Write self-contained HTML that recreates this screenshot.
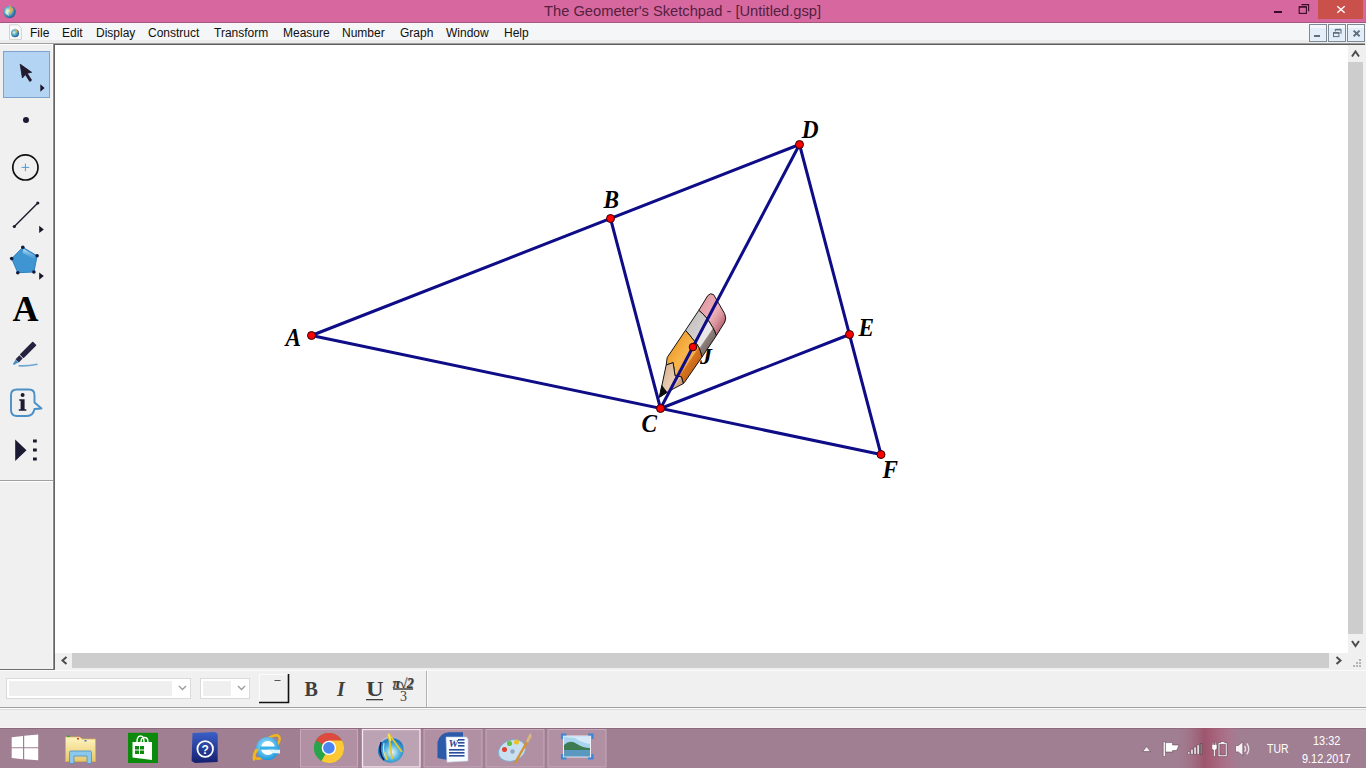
<!DOCTYPE html>
<html><head><meta charset="utf-8">
<style>
*{margin:0;padding:0;box-sizing:border-box}
html,body{width:1366px;height:768px;overflow:hidden;background:#f0f0f0;font-family:"Liberation Sans",sans-serif;position:relative}
.a{position:absolute}
#title{left:0;top:0;width:1366px;height:23px;background:#d6689f;border-bottom:1px solid #a05a80}
#ttext{left:544px;top:2px;font-size:14.7px;color:#55203f;white-space:nowrap;line-height:18px}
#close{left:1318px;top:0;width:45px;height:19px;background:#c9504b}
#menubar{left:0;top:23px;width:1366px;height:20px;background:#f5f6f7;border-top:1px solid #fbf3f8}
.mi{position:absolute;top:26px;font-size:12px;color:#101010;line-height:15px;white-space:nowrap}
#mline{left:0;top:43px;width:1365px;height:1px;background:#a0a0a0}
#mline2{left:53px;top:44px;width:1312px;height:1px;background:#5e5e5e}
#mline3{left:0;top:44px;width:53px;height:1px;background:#fff}
#mband{left:0;top:40px;width:1366px;height:3px;background:#ececec}
#leftp{left:0;top:45px;width:53px;height:624px;background:#f0f0f0}
#vline{left:53px;top:44px;width:1px;height:626px;background:#8a8a8a}
#vline2{left:54px;top:44px;width:1px;height:626px;background:#646464}
#lbot{left:0;top:669px;width:55px;height:1px;background:#6f6f6f}
#canvas{left:55px;top:45px;width:1293px;height:608px;background:#fff}
#vscroll{left:1348px;top:45px;width:17px;height:608px;background:#f0f0f0}
#vthumb{left:1348px;top:62px;width:15px;height:572px;background:#cdcdcd}
#hscroll{left:55px;top:653px;width:1310px;height:16px;background:#f0f0f0}
#hthumb{left:72px;top:653px;width:1257px;height:15px;background:#cdcdcd}
#tbar{left:0;top:670px;width:1366px;height:37px;background:#f0f0f0;border-top:1px solid #fafafa}
#sline{left:0;top:707px;width:1366px;height:1px;background:#a0a0a0}
#sline2{left:0;top:708px;width:1366px;height:1px;background:#fdfdfd}
#status{left:0;top:709px;width:1366px;height:19px;background:#f0f0f0}
#taskbar{left:0;top:728px;width:1366px;height:40px;background:#a17f92;border-top:1px solid #8c6a7e}
#s3{left:0;top:709px;width:1366px;height:1px;background:#dcdcdc}
#s4{left:0;top:727px;width:1366px;height:1px;background:#f8f2f6}
.lbl{position:absolute;font:bold italic 25px "Liberation Serif",serif;line-height:1;color:#000;transform:scaleX(0.93);transform-origin:50% 50%}
.tb{position:absolute;top:729px;width:59px;height:39px;background:rgba(255,255,255,0.12);border:1px solid rgba(255,255,255,0.3)}
.tray{position:absolute;color:#fff;font-size:12px;line-height:14px;white-space:nowrap}
</style></head><body>
<div id="title" class="a"></div>
<div id="ttext" class="a">The Geometer's Sketchpad - [Untitled.gsp]</div>
<div id="close" class="a"></div>
<div id="menubar" class="a"></div><div id="mband" class="a"></div>
<div class="mi" style="left:30px">File</div>
<div class="mi" style="left:62px">Edit</div>
<div class="mi" style="left:96px">Display</div>
<div class="mi" style="left:148px">Construct</div>
<div class="mi" style="left:214px">Transform</div>
<div class="mi" style="left:283px">Measure</div>
<div class="mi" style="left:342px">Number</div>
<div class="mi" style="left:400px">Graph</div>
<div class="mi" style="left:446px">Window</div>
<div class="mi" style="left:504px">Help</div>
<div id="mline" class="a"></div><div id="mline2" class="a"></div><div id="mline3" class="a"></div>
<div id="leftp" class="a"></div><div class="a" style="left:52px;top:45px;width:1px;height:624px;background:#f8f8f8"></div>
<div id="canvas" class="a"></div>
<div id="vline" class="a"></div><div id="vline2" class="a"></div>
<div id="lbot" class="a"></div>
<div id="vscroll" class="a"></div>
<div id="vthumb" class="a"></div>
<div id="hscroll" class="a"></div>
<div id="hthumb" class="a"></div>
<div id="tbar" class="a"></div>
<div id="sline" class="a"></div>
<div id="sline2" class="a"></div>
<div id="status" class="a"></div><div id="s3" class="a"></div><div id="s4" class="a"></div>
<div id="taskbar" class="a"></div>



<!-- window chrome -->
<svg class="a" style="left:0;top:0" width="1366" height="45" viewBox="0 0 1366 45">
<defs>
<radialGradient id="gspic" cx="0.4" cy="0.4" r="0.6"><stop offset="0" stop-color="#e8f4e0"/><stop offset="0.5" stop-color="#5fb0c8"/><stop offset="1" stop-color="#1f5f9a"/></radialGradient>
</defs>
<!-- app icon -->
<circle cx="9.5" cy="12" r="6.2" fill="url(#gspic)"/>
<path d="M9,4.2 L13.5,9.5 L10.5,15 Z" fill="#e8b040" opacity="0.85"/>
<path d="M7,8 L9,16 L5,13 Z" fill="#f4f0d0" opacity="0.8"/>
<!-- minimize -->
<rect x="1274" y="11" width="8" height="2" fill="#3a0a28"/>
<!-- restore -->
<rect x="1299.2" y="6.8" width="7.2" height="6.6" fill="none" stroke="#3a0a28" stroke-width="1.1"/>
<rect x="1299.2" y="6.4" width="7.2" height="1.2" fill="#3a0a28"/>
<path d="M1301.5,4.6 H1308.6 V11.2" fill="none" stroke="#3a0a28" stroke-width="1.1"/>
<!-- close X -->
<path d="M1337.3,6.2 L1344.7,12.8 M1344.7,6.2 L1337.3,12.8" stroke="#fff" stroke-width="1.4"/>
<!-- doc icon -->
<path d="M9.5,24.8 H18 L21.3,28 V39.4 H9.5 Z" fill="#fafafa" stroke="#c8c8c8" stroke-width="0.8"/>
<circle cx="15" cy="33.3" r="4" fill="url(#gspic)"/>
<path d="M14.8,27.8 L17.6,31.2 L15.3,34 Z" fill="#e8b040" opacity="0.8"/>
<!-- mdi buttons -->
<g fill="#e4eef8" stroke="#7f8994" stroke-width="1">
<rect x="1309.5" y="24.5" width="17" height="17"/>
<rect x="1328.5" y="24.5" width="17" height="17"/>
<rect x="1347.5" y="24.5" width="17" height="17"/>
</g>
<rect x="1314" y="35" width="6" height="2" fill="#5f6e7d"/>
<g fill="#f4f8fc"><rect x="1310" y="25" width="16" height="3"/><rect x="1329" y="25" width="16" height="3"/><rect x="1348" y="25" width="16" height="3"/></g>
<rect x="1333.5" y="32.6" width="5.4" height="4" fill="none" stroke="#5f6e7d" stroke-width="1"/>
<rect x="1333" y="32.1" width="6.4" height="1.6" fill="#5f6e7d"/>
<path d="M1335.3,31.5 V29.3 H1341 V33.9" fill="none" stroke="#5f6e7d" stroke-width="1"/>
<rect x="1335.3" y="29.1" width="5.7" height="1.3" fill="#5f6e7d"/>
<path d="M1353.6,30.6 L1359.6,36.3 M1359.6,30.6 L1353.6,36.3" stroke="#5f6e7d" stroke-width="1.9"/>
</svg>

<!-- left tools -->
<div class="a" style="left:3px;top:51px;width:47px;height:47px;background:#b4d4f4;border:1px solid #7ea3cf"></div>
<svg class="a" style="left:0;top:45px" width="53" height="440" viewBox="0 45 53 440">
<defs>
<linearGradient id="hlg" x1="0.4" y1="0" x2="0.2" y2="1"><stop offset="0" stop-color="#d8f0fc"/><stop offset="1" stop-color="#3f95d2" stop-opacity="0"/></linearGradient>
<linearGradient id="pg" x1="0" y1="0" x2="1" y2="1"><stop offset="0" stop-color="#4aa0dc"/><stop offset="0.5" stop-color="#9fd0f0"/><stop offset="1" stop-color="#3d8fce"/></linearGradient>
</defs>
<!-- arrow -->
<path d="M20.2,64.2 L31.6,72.3 L27.2,73.2 L31.6,80.2 L29.8,81.5 L25.4,74.6 L22.4,78 Z" fill="#231a30" stroke="#1a1428" stroke-width="0.8" stroke-linejoin="round"/>
<path d="M40.3,84.3 L44.6,88 L40.3,91.7 Z" fill="#1a1428"/>
<!-- point -->
<circle cx="26" cy="120" r="3" fill="#1c1a33"/>
<!-- circle -->
<circle cx="25.4" cy="167.4" r="12.6" fill="none" stroke="#111" stroke-width="1.7"/>
<path d="M25.4,163.6 V171.2 M21.6,167.4 H29.2" stroke="#4d9ad6" stroke-width="1"/>
<!-- segment -->
<line x1="14.3" y1="226.5" x2="37.8" y2="203" stroke="#1d1b2e" stroke-width="1.4"/>
<circle cx="14.3" cy="226.5" r="1.6" fill="#1d1b2e"/>
<circle cx="37.8" cy="203" r="1.6" fill="#1d1b2e"/>
<path d="M39.2,225.8 L43.8,229.4 L39.2,233 Z" fill="#1a1428"/>
<!-- polygon -->
<path d="M22.8,247.3 L37.1,255.8 L33.9,272 L17.8,272.7 L11.7,258.6 Z" fill="#3f95d2" stroke="#2e7fbd" stroke-width="1"/>
<path d="M23.5,248.8 L35.8,256.2 L35,260 L22.5,253 Z" fill="url(#hlg)"/>
<g fill="#151b3a"><circle cx="22.8" cy="247.3" r="1.8"/><circle cx="37.1" cy="255.8" r="1.8"/><circle cx="33.9" cy="272" r="1.8"/><circle cx="17.8" cy="272.7" r="1.8"/><circle cx="11.7" cy="258.6" r="1.8"/></g>
<path d="M39.2,272.5 L43.8,276.1 L39.2,279.7 Z" fill="#1a1428"/>
<!-- marker -->
<g transform="translate(33.6,344.4) rotate(135)">
<rect x="-1.5" y="-2.7" width="18.5" height="5.4" rx="0.8" fill="#24223f"/>
<rect x="17.8" y="-2.3" width="5.4" height="4.6" fill="#2a2848"/>
<path d="M23.2,-2 L28.5,-0.8 V0.8 L23.2,2 Z" fill="#4a8fc6"/>
</g>
<path d="M18.5,365.8 Q28,366.2 37.5,364.2" stroke="#6aa7d4" stroke-width="1.6" fill="none"/>
<!-- info -->
<path d="M17,389.5 H29 Q34.5,389.5 34.5,395 V402.5 L41.5,408.5 L34.5,409 Q33,416 27,416 H17 Q11,416 11,410 V395 Q11,389.5 17,389.5 Z" fill="none" stroke="#4a8fc6" stroke-width="1.9" stroke-linejoin="round"/>
<circle cx="22.6" cy="395" r="2" fill="#1c1a33"/>
<path d="M19.2,399.2 H24.6 V409.2 H26.3 V410.8 H18.8 V409.2 H20.6 V400.8 H19.2 Z" fill="#1c1a33"/>
<!-- play more -->
<path d="M15.2,439.6 L26.5,450.3 L15.2,461 Z" fill="#1c1a33"/>
<rect x="33" y="439.5" width="3.8" height="3" fill="#1c1a33"/>
<rect x="33" y="448.5" width="3.8" height="3" fill="#1c1a33"/>
<rect x="33" y="457.5" width="3.8" height="3" fill="#1c1a33"/>
</svg>
<div class="a" style="left:12.5px;top:290.5px;font:bold 36px 'Liberation Serif',serif;line-height:36px;color:#000">A</div>
<div class="a" style="left:0;top:480px;width:53px;height:1px;background:#a0a0a0"></div><div class="a" style="left:0;top:481px;width:53px;height:1px;background:#fff"></div>


<!-- scroll arrows & text toolbar -->
<svg class="a" style="left:0;top:0" width="1366" height="768" viewBox="0 0 1366 768">
<path d="M1352,56.5 L1355.5,51.5 L1359,56.5" fill="none" stroke="#4d4d4d" stroke-width="2"/>
<path d="M1352,641 L1355.5,646 L1359,641" fill="none" stroke="#4d4d4d" stroke-width="2"/>
<path d="M66.5,657 L62.5,660.5 L66.5,664" fill="none" stroke="#4d4d4d" stroke-width="2"/>
<path d="M1336.5,657 L1340.5,660.5 L1336.5,664" fill="none" stroke="#4d4d4d" stroke-width="2"/>
<g fill="#b4b4b4">
<rect x="1359" y="659" width="2" height="2"/>
<rect x="1356" y="662" width="2" height="2"/><rect x="1359" y="662" width="2" height="2"/>
<rect x="1353" y="665" width="2" height="2"/><rect x="1356" y="665" width="2" height="2"/><rect x="1359" y="665" width="2" height="2"/>
</g>
<!-- font combo -->
<rect x="6.5" y="678.5" width="184" height="20" fill="#fff" stroke="#dadada"/>
<rect x="9" y="681" width="163" height="15" fill="#efefef"/>
<path d="M179,686 L182.5,689.5 L186,686" fill="none" stroke="#9a9a9a" stroke-width="1.3"/>
<!-- size combo -->
<rect x="200.5" y="678.5" width="49" height="20" fill="#fff" stroke="#dadada"/>
<rect x="203" y="681" width="28" height="15" fill="#efefef"/>
<path d="M238,686 L241.5,689.5 L245,686" fill="none" stroke="#9a9a9a" stroke-width="1.3"/>
<!-- color button -->
<path d="M259.5,702.5 V674.5 H287.5" fill="none" stroke="#fcfcfc" stroke-width="1"/>
<path d="M259,702.5 H288.5 V674" fill="none" stroke="#111" stroke-width="1.6"/>
<rect x="274.5" y="680" width="6" height="1" fill="#555"/>
<!-- separator -->
<rect x="426" y="671" width="1" height="36" fill="#b0b0b0"/>
<rect x="427" y="671" width="1" height="36" fill="#fcfcfc"/>
<!-- underline for U -->
<rect x="366" y="699" width="17" height="1.3" fill="#3f3f3f"/>
</svg>
<div class="a" style="left:304.5px;top:676.5px;font:bold 20px 'Liberation Serif',serif;line-height:24px;color:#3f3f3f">B</div>
<div class="a" style="left:337px;top:676.5px;font:bold italic 20px 'Liberation Serif',serif;line-height:24px;color:#3f3f3f">I</div>
<div class="a" style="left:366px;top:676.5px;font:bold 20px 'Liberation Serif',serif;line-height:24px;color:#3f3f3f;transform:scaleX(1.22);transform-origin:0 0">U</div>
<div class="a" style="left:392.5px;top:677.5px;font:bold italic 14px 'Liberation Serif',serif;line-height:12px;color:#3a3a3a;letter-spacing:-0.6px;text-shadow:0.5px 0.8px 0.6px #888">π√2</div><div class="a" style="left:393px;top:687.5px;width:20px;height:2.5px;background:#6a6a6a"></div>
<div class="a" style="left:400px;top:690px;font:14px 'Liberation Serif',serif;line-height:14px;color:#3f3f3f">3</div>

<!-- geometry -->
<svg class="a" style="left:0;top:0" width="1366" height="768" viewBox="0 0 1366 768">
<g stroke="#0e0c86" stroke-width="3" stroke-linecap="round" fill="none">
<line x1="311.5" y1="335.5" x2="799.5" y2="144.5"/>
<line x1="311.5" y1="335.5" x2="881" y2="454.5"/>
<line x1="610.5" y1="218.5" x2="660.5" y2="408.5"/>
<line x1="799.5" y1="144.5" x2="881" y2="454.5"/>
<line x1="660.5" y1="408.5" x2="849.5" y2="334.5"/>
</g>
<text x="700" y="364.1" font-family="Liberation Serif" font-weight="bold" font-style="italic" font-size="24" fill="#000">J</text>
<!-- pencil cursor -->
<defs>
<linearGradient id="gOr" gradientUnits="userSpaceOnUse" x1="667.2" y1="357.5" x2="690.7" y2="373.5">
<stop offset="0" stop-color="#f0a232"/><stop offset="0.4" stop-color="#f7b44c"/><stop offset="0.7" stop-color="#f2b050"/><stop offset="0.74" stop-color="#d8761f"/><stop offset="1" stop-color="#c4651a"/></linearGradient>
<linearGradient id="gFe" gradientUnits="userSpaceOnUse" x1="685.5" y1="330.3" x2="709" y2="346.3">
<stop offset="0" stop-color="#c9c4c4"/><stop offset="0.48" stop-color="#d6d1d1"/><stop offset="0.52" stop-color="#ece8e8"/><stop offset="0.74" stop-color="#ebe6e6"/><stop offset="0.78" stop-color="#8e817d"/><stop offset="1" stop-color="#7a6c68"/></linearGradient>
<linearGradient id="gEr" gradientUnits="userSpaceOnUse" x1="698.8" y1="309.9" x2="722.3" y2="325.9">
<stop offset="0" stop-color="#e39ca6"/><stop offset="0.5" stop-color="#eeb0b8"/><stop offset="0.75" stop-color="#d9949c"/><stop offset="1" stop-color="#b86874"/></linearGradient>
<linearGradient id="gWo" gradientUnits="userSpaceOnUse" x1="662" y1="375" x2="685.5" y2="391">
<stop offset="0" stop-color="#dcb898"/><stop offset="0.55" stop-color="#ecd2bc"/><stop offset="0.62" stop-color="#d4a684"/><stop offset="1" stop-color="#c08a62"/></linearGradient>
</defs>
<g stroke="#141414" stroke-width="1" stroke-linejoin="round">
<path d="M698.8,310.3 L707.8,295.6 Q710.3,292.4 713.6,294.6 L724.6,313.6 Q726.8,318.2 724.8,322 L716.3,335.7 Q714,328 706.6,318.1 Q703,313.5 698.8,310.3 Z" fill="url(#gEr)"/>
<path d="M685.5,330.3 L698.8,310.3 Q703,313.5 706.6,318.1 Q714,328 716.3,335.7 L702,357 Q699.5,346 694,340.6 Q690,335.5 685.5,330.3 Z" fill="url(#gFe)"/>
<path d="M667.2,357.5 L685.5,330.3 Q690,335.5 694,340.6 Q699.5,346 702,357 L684.3,382.6 L683.3,383.6 L681.4,376.8 L675,375.8 L673.1,362.6 L666.2,365 Z" fill="url(#gOr)"/>
<path d="M666.2,365 L673.1,362.6 L675,375.8 L681.4,376.8 L683.3,383.6 L669.6,390.8 L659.4,397.3 Z" fill="url(#gWo)"/>
</g>
<path d="M659.4,397.3 L661.8,385.5 L666.9,392.3 Z" fill="#0c0c0c" stroke="#0c0c0c" stroke-width="0.8" stroke-linejoin="round"/>
<line x1="660.5" y1="408.5" x2="799.5" y2="144.5" stroke="#0e0c86" stroke-width="3"/>
<g fill="#ff0000" stroke="#300000" stroke-width="1">
<circle cx="311.5" cy="335.5" r="4"/>
<circle cx="610.5" cy="218.5" r="4"/>
<circle cx="799.5" cy="144.5" r="4"/>
<circle cx="660.5" cy="408.5" r="4"/>
<circle cx="849.5" cy="334.5" r="4"/>
<circle cx="881" cy="454.5" r="4"/>
<circle cx="693" cy="347" r="3.8"/>
</g>
</svg>
<div class="lbl" style="left:285px;top:324.5px">A</div>
<div class="lbl" style="left:602.5px;top:186.5px">B</div>
<div class="lbl" style="left:641px;top:410.5px">C</div>
<div class="lbl" style="left:800.5px;top:116.5px">D</div>
<div class="lbl" style="left:857.5px;top:314.5px">E</div>
<div class="lbl" style="left:882px;top:456.5px">F</div>


<!-- taskbar -->
<svg class="a" style="left:0;top:728px" width="1366" height="40" viewBox="0 728 1366 40">
<defs>
<linearGradient id="redglow" x1="0" y1="0" x2="1" y2="0">
<stop offset="0" stop-color="#a17f92" stop-opacity="0"/>
<stop offset="0.3" stop-color="#a06078" stop-opacity="0.6"/>
<stop offset="0.45" stop-color="#9c4e66" stop-opacity="0.85"/>
<stop offset="0.6" stop-color="#a85a74" stop-opacity="0.75"/>
<stop offset="0.8" stop-color="#b06c88" stop-opacity="0.5"/>
<stop offset="1" stop-color="#a17f92" stop-opacity="0"/>
</linearGradient>
<linearGradient id="bookg" x1="0" y1="0" x2="0" y2="1"><stop offset="0" stop-color="#3a60c8"/><stop offset="1" stop-color="#152070"/></linearGradient>
<radialGradient id="ieg" cx="0.45" cy="0.4" r="0.6"><stop offset="0" stop-color="#b8ecfc"/><stop offset="1" stop-color="#1d9ae0"/></radialGradient>
<radialGradient id="gspb" cx="0.55" cy="0.6" r="0.6"><stop offset="0" stop-color="#f0fafc"/><stop offset="0.45" stop-color="#58b8e0"/><stop offset="0.85" stop-color="#1878c0"/><stop offset="1" stop-color="#d8c8e0"/></radialGradient>
<linearGradient id="photog" x1="0" y1="0" x2="0" y2="1"><stop offset="0" stop-color="#a8d8f0"/><stop offset="0.55" stop-color="#3e8a62"/><stop offset="1" stop-color="#5a9ac0"/></linearGradient>
<linearGradient id="folderg" x1="0" y1="0" x2="0" y2="1"><stop offset="0" stop-color="#fff4c0"/><stop offset="1" stop-color="#e8c868"/></linearGradient>
</defs>
<rect x="1172" y="728" width="72" height="40" fill="url(#redglow)"/>
<!-- windows logo -->
<path d="M11.7,737.3 L23,735.9 V747.3 H11.7 Z M24.2,735.7 L38.2,734.5 V747.3 H24.2 Z M11.7,748.3 H23 V759.2 L11.7,757.9 Z M24.2,748.3 H38.2 V760.2 L24.2,759.3 Z" fill="#fff"/>
<!-- folder -->
<path d="M65.5,737 H80 L82,739 H95.5 V761.5 H65.5 Z" fill="url(#folderg)" stroke="#d8b050" stroke-width="0.8"/>
<rect x="67.5" y="735.5" width="2" height="1.5" fill="#20a020"/>
<rect x="77" y="738" width="2" height="1.5" fill="#d04020"/>
<rect x="84.5" y="740" width="2" height="1.5" fill="#3080d0"/>
<path d="M69.5,763.5 V752.5 Q69.5,751 71,751 H90 Q91.5,751 91.5,752.5 V763.5 H87 V756 H74 V763.5 Z" fill="#8cc8ec" stroke="#4a90c8" stroke-width="0.8"/>
<!-- store -->
<rect x="128" y="732.8" width="30" height="30.2" fill="#0b8a0b"/>
<path d="M132.5,742 H152 L152,760 L132.5,757.5 Z" fill="#fff"/>
<path d="M137,742 Q137,736 140.5,736 Q144,736 144,742 M141,742 Q141,737.5 144.5,737.5 Q148,737.5 148,742" fill="none" stroke="#fff" stroke-width="1.4"/>
<g fill="#0b8a0b"><rect x="135" y="746" width="4" height="3.5"/><rect x="140" y="746" width="4" height="3.5"/><rect x="135" y="750.5" width="4" height="3.5"/><rect x="140" y="750.5" width="4" height="3.5"/></g>
<!-- help book -->
<path d="M192.5,733 L215,732 L217.7,734 V762 L195,763 L191.6,761 Z" fill="url(#bookg)"/>
<circle cx="205.2" cy="749" r="7.8" fill="none" stroke="#fff" stroke-width="1.8"/>
<text x="205.2" y="753.5" font-family="Liberation Sans" font-weight="bold" font-size="12" fill="#fff" text-anchor="middle">?</text>
<!-- IE -->
<ellipse cx="267" cy="747" rx="16" ry="6.5" transform="rotate(-42 267 747)" fill="none" stroke="#f2b718" stroke-width="2.4"/>
<circle cx="267.5" cy="748.5" r="11.5" fill="url(#ieg)"/>
<circle cx="268" cy="748" r="7" fill="#fff"/>
<rect x="260" y="746.5" width="16" height="3.2" fill="#3ab0e8"/>
<path d="M268,749.7 H280 V753.5 L273,753 Z" fill="#dff3fb"/>
<path d="M254.5,760.5 Q252,756 258,749" fill="none" stroke="#f2b718" stroke-width="2.4"/>
<!-- buttons -->
<g fill="#b190a4" stroke="#c6a9ba" stroke-width="1">
<rect x="300.5" y="729.5" width="57" height="37.5"/>
<rect x="424" y="729.5" width="58" height="37.5"/>
<rect x="486" y="729.5" width="58" height="37.5"/>
<rect x="548" y="729.5" width="58" height="37.5"/>
</g>
<rect x="362.5" y="729.5" width="57.5" height="37.5" fill="#bca3b3" stroke="#f4e6ee" stroke-width="1.3"/>
<!-- chrome -->
<circle cx="328.9" cy="747.9" r="15" fill="#2aa44a"/>
<path d="M328.9,747.9 L316,740.4 A15,15 0 0 1 341.8,740.4 Z" fill="#dd4b3e"/>
<path d="M316,740.4 A15,15 0 0 1 328.9,732.9 A15,15 0 0 1 341.8,740.4 L328.9,740.4 Z" fill="#dd4b3e"/>
<path d="M328.9,740.4 H342 A15,15 0 0 1 321.5,761 L328.9,747.9 Z" fill="#fcc934"/>
<circle cx="328.9" cy="747.9" r="7.2" fill="#fff"/>
<circle cx="328.9" cy="747.9" r="5.8" fill="#4a85f0"/>
<!-- gsp -->
<circle cx="390.6" cy="749.7" r="13" fill="url(#gspb)"/>
<path d="M381,742 Q378,752 384,760" stroke="#1a1a50" stroke-width="1.6" fill="none"/>
<path d="M384,743 Q382,752 387,760" stroke="#e8f8fc" stroke-width="1.2" fill="none" opacity="0.8"/>
<path d="M385,752 L387,760" stroke="#e0d040" stroke-width="1.6" fill="none"/>
<path d="M388.4,733.5 L392.2,759.1 M388.4,733.5 L402,752" stroke="#e8c828" stroke-width="1.8" fill="none"/>
<path d="M388.4,734 L391,741" stroke="#f8e870" stroke-width="1.4"/>
<!-- word -->
<path d="M437.5,742 Q440,733 449,732.3 H463 V757 Q450,762 437.5,758 Z" fill="#2b5aaa"/>
<path d="M446,737 H466.5 L468,739 V761 L447,762.2 Z" fill="#f8fbff" stroke="#c0d0e8" stroke-width="0.6"/>
<text x="448.5" y="746.5" font-family="Liberation Serif" font-weight="bold" font-style="italic" font-size="11" fill="#2b4c9c">W</text>
<g fill="#2b4c9c"><rect x="458" y="739" width="6.5" height="1.6"/><rect x="458" y="742" width="6.5" height="1.6"/><rect x="458" y="745" width="6.5" height="1.6"/><rect x="449" y="749" width="15.5" height="1.6"/><rect x="449" y="752" width="15.5" height="1.6"/><rect x="449" y="755" width="15.5" height="1.6"/></g>
<!-- paint -->
<ellipse cx="512" cy="750.5" rx="14" ry="10.5" transform="rotate(-20 512 750.5)" fill="#c8e0f0" stroke="#7aa8d0" stroke-width="0.8"/>
<circle cx="504.5" cy="749.5" r="2.5" fill="#e04030"/>
<circle cx="509.5" cy="743.5" r="2.5" fill="#60c040"/>
<circle cx="516.5" cy="742" r="2.5" fill="#f0c020"/>
<circle cx="512.5" cy="751.5" r="2.2" fill="#90a8c0"/>
<path d="M515,763 L527,742" stroke="#d89030" stroke-width="2.4"/>
<path d="M526,741 L530,733 L532,736 L528,743 Z" fill="#d8b880"/>
<!-- photos -->
<rect x="563.5" y="736" width="27" height="21" fill="#a8d4f0" stroke="#fff" stroke-width="0.8"/>
<path d="M564,737 H590 V744 Q580,742 575,738 Z" fill="#e8f4fc" opacity="0.7"/>
<path d="M564,745 Q570,739 577,744 Q583,748 590,748 V751 H564 Z" fill="#3e7a52"/>
<path d="M564,750 H590 V756.5 H564 Z" fill="#5a98c0"/>
<path d="M562,739 V734.5 H566.5 M588,734.5 H592.5 V739 M592.5,754 V758.5 H588 M566.5,758.5 H562 V754" fill="none" stroke="#3a88d8" stroke-width="2.2"/>
<!-- tray -->
<g stroke="#5a3848" stroke-width="0.7" stroke-opacity="0.75" stroke-linejoin="round">
<path d="M1142.6,751.6 L1146.6,746.6 L1150.6,751.6 Z" fill="#f4f0f2"/>
<path d="M1163.2,741.7 H1165.4 V756.6 H1163.2 Z" fill="#fff"/>
<path d="M1165.4,742.6 H1172.6 V745 H1179 L1177.8,748 L1176.5,750.5 H1172.6 V752 H1165.4 Z" fill="#fff"/>
<rect x="1187.9" y="751.6" width="1.9" height="2.8" fill="#fff"/>
<rect x="1190.9" y="749.2" width="2.1" height="5.2" fill="#fff"/>
<rect x="1194" y="747" width="2.1" height="7.4" fill="#fff"/>
<rect x="1197.1" y="744.8" width="2.1" height="9.6" fill="#fff"/>
<rect x="1200.2" y="743.5" width="2.1" height="10.9" fill="#8a8a8a"/>
<path d="M1212.4,741.7 H1213.6 V744.5 H1215.2 V741.7 H1216.4 V744.5 H1217 V748.8 L1215.3,750 V756.6 H1213.5 V750 L1211.8,748.8 V744.5 H1212.4 Z" fill="#fff"/>
<path d="M1220.5,741.7 H1224.7 V742.7 H1227 V756.6 H1218.2 V742.7 H1220.5 Z M1219.8,744.3 V755 H1225.4 V744.3 Z" fill="#fff" fill-rule="evenodd"/>
<path d="M1235.5,745.6 H1238.3 L1242.8,741.7 V755.8 L1238.3,751.9 H1235.5 Z" fill="#f6f2f4"/>
<path d="M1244.6,745.8 Q1246.6,748.8 1244.6,751.8" fill="none" stroke="#fff" stroke-width="1.3"/>
<path d="M1246.9,743.3 Q1250.6,748.8 1246.9,754.3" fill="none" stroke="#fff" stroke-width="1.3"/>
</g>
</svg>

<div class="tray" style="left:1267px;top:742px;transform:scaleX(0.87);transform-origin:0 0">TUR</div>
<div class="tray" style="left:1313px;top:734px;transform:scaleX(0.91);transform-origin:0 0">13:32</div>
<div class="tray" style="left:1302px;top:751.5px;transform:scaleX(0.91);transform-origin:0 0">9.12.2017</div>
</body></html>
